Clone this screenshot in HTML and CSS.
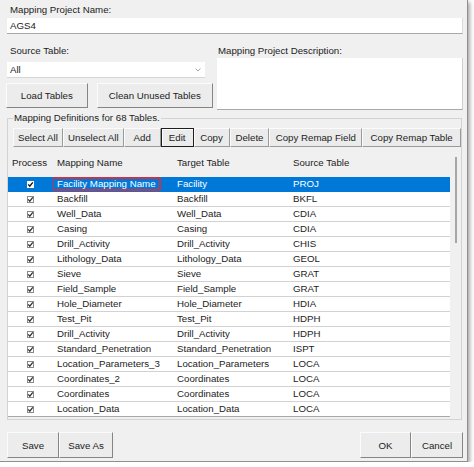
FILE: index.html
```html
<!DOCTYPE html>
<html>
<head>
<meta charset="utf-8">
<link rel="stylesheet" href="styles.css">
</head>
<body>
<div class="window">
  <div class="label name-label">Mapping Project Name:</div>
  <div class="textbox">AGS4</div>
  <div class="top-row">
    <div class="source-col">
      <div class="label">Source Table:</div>
      <div class="combo"><span>All</span><svg class="chev" width="6" height="4" viewBox="0 0 6 4"><path d="M0.5 0.5 L3 3 L5.5 0.5" fill="none" stroke="#a8a8a8" stroke-width="1"/></svg></div>
      <div class="btn-row">
        <button class="btn btn-load">Load Tables</button>
        <button class="btn btn-clean">Clean Unused Tables</button>
      </div>
    </div>
    <div class="desc-col">
      <div class="label">Mapping Project Description:</div>
      <div class="textarea"></div>
    </div>
  </div>
  <fieldset class="group">
    <legend>Mapping Definitions for 68 Tables.</legend>
    <div class="toolbar">
      <button class="tb w-sel">Select All</button>
      <button class="tb w-unsel">Unselect All</button>
      <button class="tb w-add">Add</button>
      <button class="tb tb-default w-edit">Edit</button>
      <button class="tb w-copy">Copy</button>
      <button class="tb w-del">Delete</button>
      <button class="tb w-crf">Copy Remap Field</button>
      <button class="tb w-crt">Copy Remap Table</button>
    </div>
    <div class="grid">
      <div class="grid-main">
        <div class="grid-head cols">
          <div class="h-process">Process</div>
          <div class="cell">Mapping Name</div>
          <div class="cell">Target Table</div>
          <div class="cell">Source Table</div>
        </div>
        <div class="grid-rows" id="rows">
          <div class="row cols selected">
            <div class="chk"><svg width="7" height="7" viewBox="0 0 7 7"><rect x="0.5" y="0.5" width="6" height="6" fill="#fff" stroke="#fff"/><path d="M1.2 3.4 L2.8 5.2 L5.8 1.4" fill="none" stroke="#111" stroke-width="1.4"/></svg></div>
            <div class="cell"><span class="hl">Facility Mapping Name</span></div>
            <div class="cell">Facility</div>
            <div class="cell">PROJ</div>
          </div>
        </div>
      </div>
      <div class="vscroll"><div class="thumb"></div></div>
    </div>
  </fieldset>
  <div class="footer">
    <div class="footer-group">
      <button class="btn w-save">Save</button>
      <button class="btn w-saveas">Save As</button>
    </div>
    <div class="footer-group">
      <button class="btn w-ok">OK</button>
      <button class="btn w-cancel">Cancel</button>
    </div>
  </div>
</div>
<script src="app.js"></script>
</body>
</html>
```
FILE: styles.css
```css
* { box-sizing: border-box; }
body {
  margin: 0;
  background: #ffffff;
  font-family: "Liberation Sans", Arial, sans-serif;
  font-size: 9.7px;
  color: #1c1c1c;
}
.window {
  width: 468px;
  height: 462px;
  background: #f0f0f0;
  border-right: 1px solid #8f8f8f;
  border-bottom: 1px solid #8f8f8f;
  box-shadow: 2px 2px 4px rgba(0, 0, 0, 0.35);
  padding: 0 4px 0 7px;
  display: flex;
  flex-direction: column;
}
.label {
  height: 12px;
  line-height: 12px;
  padding-left: 3px;
  white-space: nowrap;
}
.name-label { margin-top: 4px; }
.textbox {
  margin-top: 2px;
  height: 16px;
  background: #fff;
  border-bottom: 1px solid #a9a9a9;
  border-right: 1px solid #dadada;
  line-height: 15px;
  padding-left: 3px;
}
.top-row {
  display: flex;
  margin-top: 11px;
  height: 65px;
}
.source-col { width: 206px; }
.combo {
  margin-top: 5px;
  width: 198px;
  height: 16px;
  background: #fff;
  border-bottom: 1px solid #d6d6d6;
  display: flex;
  align-items: center;
  justify-content: space-between;
  padding: 0 4px 0 3px;
}
.btn-row {
  display: flex;
  gap: 9px;
  margin-top: 5px;
  margin-left: -1px;
}
.btn {
  height: 25px;
  font: inherit;
  color: #1c1c1c;
  background: #ececec;
  border: 1px solid;
  border-color: #fbfbfb #858585 #858585 #fbfbfb;
  padding: 0;
  white-space: nowrap;
}
.btn-load { width: 82px; }
.btn-clean { width: 117px; }
.desc-col {
  margin-left: 4px;
  flex: 1;
}
.desc-col .label { padding-left: 1px; }
.textarea {
  margin-top: 1px;
  height: 52px;
  background: #fff;
  border-bottom: 1px solid #a9a9a9;
  border-right: 1px solid #cfcfcf;
}
.group {
  margin: 2px 1px 0 0;
  padding: 0 0 2px 0;
  border: 1px solid #d3d3d3;
  min-width: 0;
}
.group legend {
  margin-left: 5px;
  padding: 0 1px;
  line-height: 12px;
  height: 12px;
}
.toolbar {
  display: flex;
  margin: 4px 0 0 5px;
  height: 19px;
}
.tb {
  height: 19px;
  font: inherit;
  color: #1c1c1c;
  background: #ebebeb;
  border: 1px solid;
  border-color: #fbfbfb #9a9a9a #9a9a9a #fbfbfb;
  padding: 0;
  white-space: nowrap;
}
.tb-default {
  border: 1px solid #1e1e1e;
  box-shadow: inset 1px 1px 0 #fff;
}
.w-sel { width: 50px; }
.w-unsel { width: 61px; }
.w-add { width: 37px; }
.w-edit { width: 33px; }
.w-copy { width: 36px; }
.w-del { width: 40px; }
.w-crf { width: 93px; }
.w-crt { width: 99px; }
.grid { display: flex; }
.grid-main { width: 442px; }
.cols {
  display: grid;
  grid-template-columns: 45px 120px 116px 1fr;
  align-items: center;
}
.grid-head { height: 30px; padding-top: 1px; }
.h-process { padding-left: 4px; }
.cell {
  padding-left: 4px;
  white-space: nowrap;
  overflow: hidden;
}
.row {
  height: 15px;
  background: #fff;
  border-bottom: 1px solid #d2d2d2;
}
.row:last-child { border-bottom-color: #a9a9a9; }
.row .cell { line-height: 14px; }
.chk {
  display: flex;
  justify-content: center;
  align-items: center;
  height: 14px;
}
.chk svg { display: block; }
.selected {
  background: #0078d7;
  color: #fff;
  border-bottom-color: #0078d7;
}
.hl {
  display: inline-block;
  margin-left: -5px;
  padding: 0 3px;
  height: 14px;
  line-height: 10px;
  border: 2px solid #c4344c;
  border-radius: 2px;
  vertical-align: top;
}
.vscroll {
  flex: 1;
  display: flex;
  justify-content: center;
}
.thumb {
  margin-top: 10px;
  width: 2px;
  height: 86px;
  background: #a6a6a6;
}
.footer {
  margin-top: auto;
  margin-bottom: 3px;
  display: flex;
  justify-content: space-between;
}
.footer-group { display: flex; }
.w-save { width: 52px; height: 26px; }
.w-saveas { width: 54px; height: 26px; }
.w-ok { width: 51px; height: 26px; }
.w-cancel { width: 52px; height: 26px; }
```
FILE: app.js
```js
var data = [
  ["Backfill", "Backfill", "BKFL"],
  ["Well_Data", "Well_Data", "CDIA"],
  ["Casing", "Casing", "CDIA"],
  ["Drill_Activity", "Drill_Activity", "CHIS"],
  ["Lithology_Data", "Lithology_Data", "GEOL"],
  ["Sieve", "Sieve", "GRAT"],
  ["Field_Sample", "Field_Sample", "GRAT"],
  ["Hole_Diameter", "Hole_Diameter", "HDIA"],
  ["Test_Pit", "Test_Pit", "HDPH"],
  ["Drill_Activity", "Drill_Activity", "HDPH"],
  ["Standard_Penetration", "Standard_Penetration", "ISPT"],
  ["Location_Parameters_3", "Location_Parameters", "LOCA"],
  ["Coordinates_2", "Coordinates", "LOCA"],
  ["Coordinates", "Coordinates", "LOCA"],
  ["Location_Data", "Location_Data", "LOCA"]
];
var box = '<svg width="7" height="7" viewBox="0 0 7 7"><rect x="0.5" y="0.5" width="6" height="6" fill="#fff" stroke="#8a8a8a"/><path d="M1.2 3.4 L2.8 5.2 L5.8 1.4" fill="none" stroke="#333" stroke-width="1.3"/></svg>';
var rows = document.getElementById("rows");
data.forEach(function (d) {
  var r = document.createElement("div");
  r.className = "row cols";
  r.innerHTML = '<div class="chk">' + box + '</div><div class="cell">' + d[0] +
    '</div><div class="cell">' + d[1] + '</div><div class="cell">' + d[2] + '</div>';
  rows.appendChild(r);
});
```
